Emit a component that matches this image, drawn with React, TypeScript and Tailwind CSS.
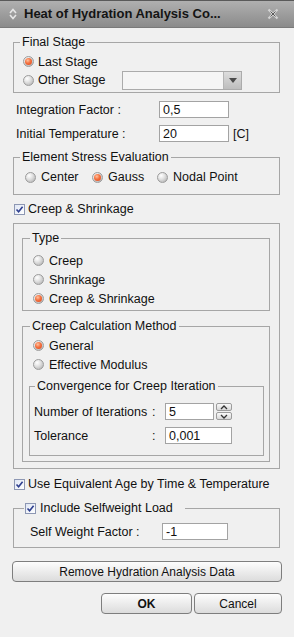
import React from "react";

function Radio({ checked }: { checked?: boolean }) {
  return (
    <span className="inline-flex items-center justify-center w-[11px] h-[11px] rounded-full border border-[#9c9c9c] shrink-0 bg-[radial-gradient(circle_at_35%_30%,#ffffff_0%,#e2e2e2_40%,#a9a9a9_100%)]">
      {checked && (
        <span className="block w-[7px] h-[7px] rounded-full bg-[radial-gradient(circle_at_40%_35%,#ffc2a0_0%,#f4713f_45%,#dc4418_100%)]" />
      )}
    </span>
  );
}

function Check() {
  return (
    <span className="inline-flex items-center justify-center w-[11px] h-[11px] border border-[#8d97b3] shrink-0 bg-gradient-to-br from-[#dfe6f4] to-[#ffffff]">
      <svg width="9" height="9" viewBox="0 0 9 9">
        <path d="M1.5 4.5 L3.6 6.8 L7.6 1.8" fill="none" stroke="#2e3f8f" strokeWidth="1.6" />
      </svg>
    </span>
  );
}

function Input({ value, w }: { value: string; w: string }) {
  return (
    <div className={`${w} h-[17px] bg-white border border-[#a3a3a3] flex items-center pl-[3px] shrink-0`}>
      {value}
    </div>
  );
}

export default function App() {
  return (
    <div className="w-[294px] h-[637px] bg-[#f0f0f0] text-[#111] text-[12.5px] leading-[14px] font-['Liberation_Sans',Arial,sans-serif] flex flex-col overflow-hidden">
      {/* title bar */}
      <div className="h-[28px] shrink-0 flex items-center border-t border-t-[#5a5a5a] border-b border-b-[#7a7a7a] bg-gradient-to-b from-[#b0b0b0] to-[#8b8b8b]">
        <svg className="ml-[9px]" width="8" height="12" viewBox="0 0 8 12">
          <path d="M1 5 L4 1.5 L7 5" fill="none" stroke="#e6e6e6" strokeWidth="1.6" />
          <path d="M1 7 L4 10.5 L7 7" fill="none" stroke="#e6e6e6" strokeWidth="1.6" />
        </svg>
        <span className="ml-[7px] font-bold text-[13px] text-[#141414]">Heat of Hydration Analysis Co...</span>
        <svg className="ml-auto mr-[15px]" width="12" height="12" viewBox="0 0 12 12">
          <path d="M1.5 1.5 L10.5 10.5 M10.5 1.5 L1.5 10.5" stroke="#d4d4d4" strokeWidth="2.2" />
          <path d="M3.5 3.5 L8.5 8.5 M8.5 3.5 L3.5 8.5" stroke="#5a5a5a" strokeWidth="1" />
        </svg>
      </div>

      <div className="flex flex-col px-[12px]">
        {/* Final Stage */}
        <fieldset className="mt-[7px] ml-[1px] mr-[2px] border border-[#a6a6a6] min-w-0">
          <legend className="ml-[6px] px-[2px] leading-[14px]">Final Stage</legend>
          <div className="pt-[4px] pb-[2px] pl-[9px]">
            <div className="h-[17px] flex items-center gap-[4px]">
              <Radio checked />
              <span>Last Stage</span>
            </div>
            <div className="h-[20px] flex items-center">
              <div className="w-[99px] flex items-center gap-[4px]">
                <Radio />
                <span>Other Stage</span>
              </div>
              <div className="w-[120px] h-[19px] border border-[#ababab] bg-[#f5f5f5] flex justify-end">
                <div className="w-[18px] h-full border-l border-[#b5b5b5] bg-gradient-to-b from-[#dddddd] to-[#bdbdbd] flex items-center justify-center">
                  <svg width="8" height="5" viewBox="0 0 8 5">
                    <path d="M0 0 L8 0 L4 5 Z" fill="#4a4a4a" />
                  </svg>
                </div>
              </div>
            </div>
          </div>
        </fieldset>

        {/* factors */}
        <div className="mt-[8px] pl-[4px] h-[17px] flex items-center">
          <span className="w-[143px]">Integration Factor :</span>
          <Input value="0,5" w="w-[70px]" />
        </div>
        <div className="mt-[7px] pl-[4px] h-[17px] flex items-center">
          <span className="w-[143px]">Initial Temperature :</span>
          <Input value="20" w="w-[70px]" />
          <span className="ml-[4px]">[C]</span>
        </div>

        {/* Element Stress Evaluation */}
        <fieldset className="mt-[8px] ml-[1px] mr-[2px] border border-[#a6a6a6] min-w-0">
          <legend className="ml-[6px] px-[2px] leading-[14px]">Element Stress Evaluation</legend>
          <div className="pt-[4px] pb-[8px] pl-[11px] h-[30px] flex items-center">
            <div className="w-[67px] flex items-center gap-[5px]">
              <Radio />
              <span>Center</span>
            </div>
            <div className="w-[65px] flex items-center gap-[5px]">
              <Radio checked />
              <span>Gauss</span>
            </div>
            <div className="flex items-center gap-[5px]">
              <Radio />
              <span>Nodal Point</span>
            </div>
          </div>
        </fieldset>

        {/* Creep & Shrinkage */}
        <div className="mt-[7px] h-[14px] pl-[2px] flex items-center gap-[3px]">
          <Check />
          <span>Creep &amp; Shrinkage</span>
        </div>

        <div className="mt-[7px] ml-[1px] mr-[2px] border border-[#a6a6a6] pl-[8px] pr-[9px] pt-[7px] pb-[6px]">
          {/* Type */}
          <fieldset className="border border-[#a6a6a6] min-w-0">
            <legend className="ml-[7px] px-[2px] leading-[14px]">Type</legend>
            <div className="pt-[6px] pb-[2px] pl-[10px]">
              <div className="h-[19px] flex items-center gap-[5px]">
                <Radio />
                <span>Creep</span>
              </div>
              <div className="h-[19px] flex items-center gap-[5px]">
                <Radio />
                <span>Shrinkage</span>
              </div>
              <div className="h-[19px] flex items-center gap-[5px]">
                <Radio checked />
                <span>Creep &amp; Shrinkage</span>
              </div>
            </div>
          </fieldset>

          {/* Creep Calculation Method */}
          <fieldset className="mt-[8px] border border-[#a6a6a6] min-w-0">
            <legend className="ml-[7px] px-[2px] leading-[14px]">Creep Calculation Method</legend>
            <div className="pt-[3px] pl-[10px]">
              <div className="h-[19px] flex items-center gap-[5px]">
                <Radio checked />
                <span>General</span>
              </div>
              <div className="h-[19px] flex items-center gap-[5px]">
                <Radio />
                <span>Effective Modulus</span>
              </div>
            </div>
            <div className="pl-[6px] pr-[5px] pb-[5px]">
              <fieldset className="mt-[5px] border border-[#a6a6a6] min-w-0">
                <legend className="ml-[5px] px-[2px] leading-[14px]">Convergence for Creep Iteration</legend>
                <div className="pt-[10px] pb-[11px] pl-[4px]">
                  <div className="h-[17px] flex items-center">
                    <span className="w-[118px]">Number of Iterations</span>
                    <span className="w-[13px]">:</span>
                    <Input value="5" w="w-[49px]" />
                    <div className="ml-[2px] w-[16px] h-[17px] flex flex-col gap-[1px]">
                      <div className="h-[8px] border border-[#9c9c9c] rounded-[2px] bg-gradient-to-b from-[#fafafa] to-[#d8d8d8] flex items-center justify-center">
                        <svg width="8" height="5" viewBox="0 0 8 5">
                          <path d="M1 4 L4 1 L7 4" fill="none" stroke="#333" strokeWidth="1.3" />
                        </svg>
                      </div>
                      <div className="h-[8px] border border-[#9c9c9c] rounded-[2px] bg-gradient-to-b from-[#fafafa] to-[#d8d8d8] flex items-center justify-center">
                        <svg width="8" height="5" viewBox="0 0 8 5">
                          <path d="M1 1 L4 4 L7 1" fill="none" stroke="#333" strokeWidth="1.3" />
                        </svg>
                      </div>
                    </div>
                  </div>
                  <div className="mt-[7px] h-[17px] flex items-center">
                    <span className="w-[118px]">Tolerance</span>
                    <span className="w-[13px]">:</span>
                    <Input value="0,001" w="w-[67px]" />
                  </div>
                </div>
              </fieldset>
            </div>
          </fieldset>
        </div>

        {/* Equivalent age */}
        <div className="mt-[8px] h-[14px] pl-[2px] flex items-center gap-[3px]">
          <Check />
          <span>Use Equivalent Age by Time &amp; Temperature</span>
        </div>

        {/* Selfweight */}
        <fieldset className="mt-[10px] ml-[1px] mr-[2px] border border-[#a6a6a6] min-w-0">
          <legend className="ml-[10px] pl-[1px] pr-[12px] leading-[14px]">
            <span className="flex items-center gap-[4px] h-[14px]">
              <Check />
              <span>Include Selfweight Load</span>
            </span>
          </legend>
          <div className="pt-[8px] pb-[7px] pl-[16px] h-[32px] flex items-center">
            <span className="w-[132px]">Self Weight Factor :</span>
            <Input value="-1" w="w-[66px]" />
          </div>
        </fieldset>

        {/* buttons */}
        <button className="mt-[13px] h-[21px] w-full rounded-[4px] border border-[#7e7e7e] bg-gradient-to-b from-[#fdfdfd] to-[#dcdcdc] text-[12px]">
          Remove Hydration Analysis Data
        </button>
        <div className="mt-[11px] flex justify-end gap-[2px]">
          <button className="w-[91px] h-[21px] rounded-[4px] border border-[#7e7e7e] bg-gradient-to-b from-[#fdfdfd] to-[#dcdcdc] font-bold text-[12px]">
            OK
          </button>
          <button className="w-[88px] h-[21px] rounded-[4px] border border-[#7e7e7e] bg-gradient-to-b from-[#fdfdfd] to-[#dcdcdc] text-[12px]">
            Cancel
          </button>
        </div>
      </div>
    </div>
  );
}
